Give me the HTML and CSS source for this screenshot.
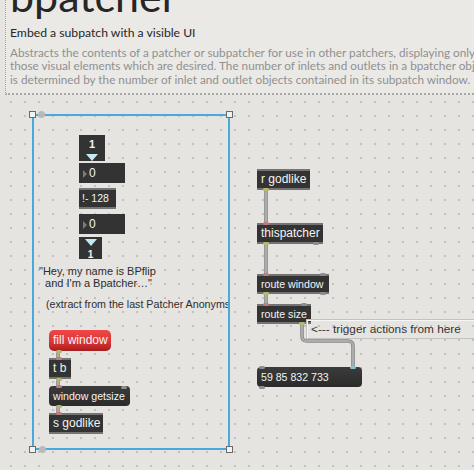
FILE: index.html
```html
<!DOCTYPE html>
<html>
<head>
  <title>bpatcher</title>
  <link rel="stylesheet" href="styles.css">
</head>
<body>
  <div class="doc-header">
    <h1 class="title">bpatcher</h1>
    <p class="tagline">Embed a subpatch with a visible UI</p>
    <p class="digest">Abstracts the contents of a patcher or subpatcher for use in other patchers, displaying only<br>those visual elements which are desired. The number of inlets and outlets in a bpatcher object<br>is determined by the number of inlet and outlet objects contained in its subpatch window.</p>
  </div>

  <div class="patcher">
    <svg class="cords" width="474" height="470" viewBox="0 0 474 470">
      <g class="cord-edge">
        <path d="M266 190 V223" />
        <path d="M266 244 V274" />
        <path d="M266 294 V304" />
        <path d="M302 324 V336 Q302 341 307 341 H348 Q353 341 353 346 V367" />
        <path d="M58 351 V358" />
        <path d="M58 379 V386" />
        <path d="M58 406 V413" />
      </g>
      <g class="cord">
        <path d="M266 190 V223" />
        <path d="M266 244 V274" />
        <path d="M266 294 V304" />
        <path d="M302 324 V336 Q302 341 307 341 H348 Q353 341 353 346 V367" />
        <path d="M58 351 V358" />
        <path d="M58 379 V386" />
        <path d="M58 406 V413" />
      </g>
    </svg>

    <div class="bpatcher">
      <div class="numbox num-down">
        <span class="num-value">1</span>
        <span class="tri-down"></span>
      </div>
      <div class="numbox num-a"><span class="num-arrow"></span>0</div>
      <div class="obj obj-sub">!- 128</div>
      <div class="numbox num-b"><span class="num-arrow"></span>0</div>
      <div class="numbox num-up">
        <span class="tri-up"></span>
        <span class="num-value small">1</span>
      </div>

      <p class="comment comment-hey">"Hey, my name is BPflip<br>&nbsp;&nbsp;and I'm a Bpatcher…"</p>
      <p class="comment comment-extract">(extract from the last Patcher Anonyms</p>

      <div class="msg msg-red msg-fill">fill window</div>
      <div class="obj obj-tb">t b</div>
      <div class="msg msg-getsize">window getsize</div>
      <div class="obj obj-send">s godlike</div>

      <span class="port outlet p-fill-out"></span>
      <span class="port inlet p-tb-in"></span>
      <span class="port outlet p-tb-out"></span>
      <span class="port inlet p-get-in"></span>
      <span class="port outlet p-get-out"></span>
      <span class="port inlet p-send-in"></span>
      <span class="port spare p-get-spare"></span>
    </div>

    <span class="handle h-tl"></span>
    <span class="handle h-tr"></span>
    <span class="handle h-bl"></span>
    <span class="handle h-br"></span>
    <span class="bp-port bp-in"></span>
    <span class="bp-port bp-out"></span>

    <div class="obj obj-receive">r godlike</div>
    <div class="obj obj-this">thispatcher</div>
    <div class="obj obj-route-win">route window</div>
    <div class="obj obj-route-size">route size</div>
    <p class="comment-box">&lt;--- trigger actions from here</p>
    <div class="msg msg-size">59 85 832 733</div>

    <span class="port outlet p-recv-out"></span>
    <span class="port inlet p-this-in"></span>
    <span class="port outlet p-this-out"></span>
    <span class="port spare p-this-spare"></span>
    <span class="port inlet p-win-in"></span>
    <span class="port spare p-win-spare-in"></span>
    <span class="port outlet p-win-out"></span>
    <span class="port spare p-win-spare-out"></span>
    <span class="port inlet p-size-in"></span>
    <span class="port spare p-size-spare"></span>
    <span class="port outlet p-size-out"></span>
    <span class="port spare p-msg-in"></span>
    <span class="port inlet-cyan p-msg-in2"></span>
    <span class="port spare p-msg-out"></span>
  </div>
</body>
</html>
```

FILE: styles.css
```css
* {
  margin: 0;
  padding: 0;
  box-sizing: border-box;
}

html, body {
  width: 474px;
  height: 470px;
  overflow: hidden;
}

body {
  font-family: 'Liberation Sans', Arial, sans-serif;
  background-color: #e5e4e0;
  background-image: radial-gradient(circle, #c2c1bd 0.9px, transparent 1.4px);
  background-size: 14px 14px;
  background-position: 4px 11px;
  position: relative;
}

/* Help file header */
.doc-header {
  margin-left: 5px;
  height: 95px;
  padding-left: 4px;
  background: #eae9e6;
  border-left: 1px dotted #a3a3a3;
  border-bottom: 2px dotted #a8a8a8;
  font-family: 'Lato', sans-serif;
  white-space: nowrap;
  overflow: hidden;
}

.title {
  font-size: 43px;
  font-weight: 400;
  line-height: 43px;
  color: #262626;
  margin-top: -26px;
}

.tagline {
  font-size: 12.2px;
  line-height: 16px;
  color: #262626;
  margin-top: 8px;
}

.digest {
  font-size: 11.75px;
  line-height: 13.3px;
  color: #909090;
  margin-top: 5px;
}

/* Patcher canvas */
.patcher {
  position: absolute;
  top: 0;
  left: 0;
  width: 474px;
  height: 470px;
}

.cords {
  position: absolute;
  top: 0;
  left: 0;
}

.cord-edge path,
.cord path {
  fill: none;
  stroke-linecap: round;
  stroke-linejoin: round;
}

.cord-edge path {
  stroke: #858585;
  stroke-width: 3.6;
}

.cord path {
  stroke: #acacac;
  stroke-width: 2;
}

.bpatcher {
  position: absolute;
  left: 32px;
  top: 114px;
  width: 198px;
  height: 336px;
  border: 2px solid #4aa9db;
  overflow: hidden;
}

.handle {
  position: absolute;
  width: 7px;
  height: 7px;
  background: #f2f2f2;
  border: 1px solid #6a6a6a;
}

.h-tl { left: 29px; top: 111px; }
.h-tr { left: 226px; top: 111px; }
.h-bl { left: 29px; top: 446px; }
.h-br { left: 226px; top: 446px; }

.bp-port {
  position: absolute;
  width: 7px;
  height: 7px;
  border-radius: 50%;
  background: #b9b9b9;
}

.bp-in { left: 38px; top: 111px; }
.bp-out { left: 39px; top: 446px; }

/* Max boxes */
.obj,
.msg,
.numbox {
  position: absolute;
  color: #f4f4f4;
  font-size: 12px;
  white-space: nowrap;
  padding-left: 4px;
}

.obj {
  height: 21px;
  line-height: 17px;
  background: #333;
  border-top: 2px solid #747474;
  border-bottom: 2px solid #747474;
}

.msg {
  height: 20px;
  line-height: 20px;
  border-radius: 4px;
  background: linear-gradient(#3b3b3b, #2b2b2b);
}

.msg-red {
  border-radius: 5px;
  background: linear-gradient(#ee4848, #dc3535 55%, #a61f1f);
}

.numbox {
  height: 20px;
  line-height: 20px;
  background: #333;
}

.num-arrow {
  display: inline-block;
  width: 0;
  height: 0;
  border-top: 4px solid transparent;
  border-bottom: 4px solid transparent;
  border-left: 4px solid #7b7b7b;
  margin-right: 2px;
  vertical-align: -1px;
}

.num-down,
.num-up {
  padding-left: 0;
  display: flex;
  flex-direction: column;
  align-items: center;
}

.num-down {
  width: 26px;
  height: 26px;
  padding-top: 4px;
}

.num-up {
  width: 23px;
  height: 22px;
  padding-top: 2px;
}

.num-value {
  font-weight: 700;
  font-size: 11px;
  line-height: 11px;
}

.num-value.small {
  font-size: 10px;
  margin-top: 3px;
}

.tri-down,
.tri-up {
  width: 0;
  height: 0;
  border-left: 6.5px solid transparent;
  border-right: 6.5px solid transparent;
  border-top: 7px solid #c3eaf0;
}

.tri-down {
  margin-top: 4px;
}

/* boxes inside the bpatcher (origin at 34,116) */
.num-down { left: 45px; top: 19px; }
.num-a { left: 45px; top: 47px; width: 46px; }
.obj-sub { left: 45px; top: 72px; width: 37px; font-size: 10.5px; padding-left: 3px; }
.num-b { left: 45px; top: 98px; width: 46px; }
.num-up { left: 45px; top: 121px; }
.msg-fill { left: 15px; top: 214px; width: 62px; height: 21px; line-height: 21px; }
.obj-tb { left: 15px; top: 242px; width: 22px; }
.msg-getsize { left: 15px; top: 270px; width: 81px; font-size: 10.6px; }
.obj-send { left: 15px; top: 297px; width: 54px; }

.comment {
  position: absolute;
  font-size: 11px;
  line-height: 12px;
  color: #2e2e2e;
  white-space: nowrap;
}

.comment-hey { left: 5px; top: 149px; }
.comment-extract { left: 12px; top: 182px; font-size: 10.7px; }

/* boxes in the main patcher */
.obj-receive { left: 257px; top: 169px; width: 53px; }
.obj-this { left: 257px; top: 223px; width: 66px; }
.obj-route-win { left: 257px; top: 274px; width: 72px; height: 20px; line-height: 16px; font-size: 10.6px; }
.obj-route-size { left: 257px; top: 304px; width: 54px; height: 20px; line-height: 16px; font-size: 10.6px; }
.msg-size { left: 257px; top: 367px; width: 105px; font-size: 10.6px; }

.comment-box {
  position: absolute;
  left: 306px;
  top: 319px;
  width: 200px;
  height: 20px;
  padding-left: 4px;
  font-size: 11.8px;
  line-height: 18px;
  color: #333;
  white-space: nowrap;
  border: 1px solid #c2c2c2;
  box-shadow: inset 1px 1px 0 #f6f6f6;
}

/* inlets and outlets */
.port {
  position: absolute;
  width: 6px;
  height: 3px;
  border-radius: 3px;
}

.inlet { background: #c57b7b; }
.outlet { background: #b8b86a; }
.spare { background: #8e8e8e; }
.inlet-cyan { background: #7fc6c8; }

.p-fill-out { left: 22px; top: 234px; }
.p-tb-in { left: 22px; top: 241px; }
.p-tb-out { left: 22px; top: 262px; }
.p-get-in { left: 22px; top: 269px; }
.p-get-out { left: 22px; top: 289px; }
.p-send-in { left: 22px; top: 296px; }
.p-get-spare { left: 87px; top: 270px; }

.p-recv-out { left: 263px; top: 188px; }
.p-this-in { left: 263px; top: 222px; }
.p-this-out { left: 263px; top: 242px; }
.p-this-spare { left: 313px; top: 242px; }
.p-win-in { left: 263px; top: 273px; }
.p-win-spare-in { left: 320px; top: 273px; }
.p-win-out { left: 263px; top: 292px; }
.p-win-spare-out { left: 320px; top: 292px; }
.p-size-in { left: 263px; top: 303px; }
.p-size-spare { left: 301px; top: 303px; }
.p-size-out { left: 299px; top: 322px; }
.p-msg-in { left: 259px; top: 366px; }
.p-msg-in2 { left: 350px; top: 366px; }
.p-msg-out { left: 259px; top: 386px; }
```
